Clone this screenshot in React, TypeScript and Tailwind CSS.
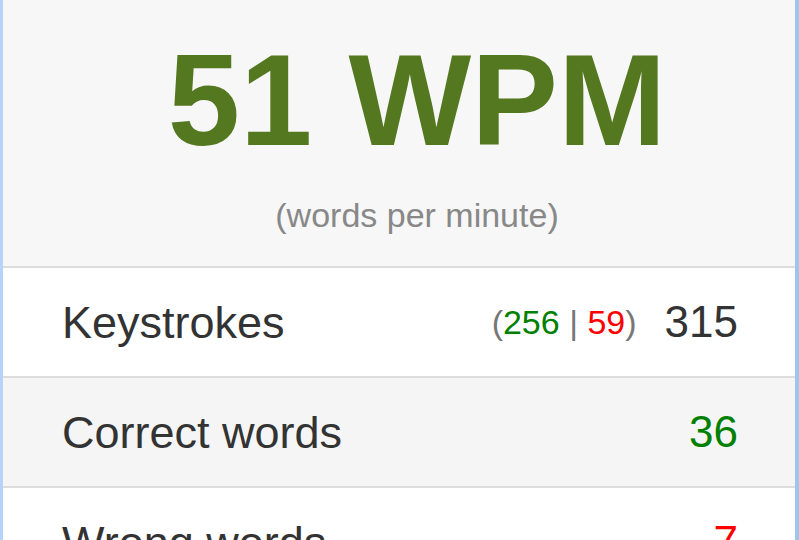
export default function App() {
  const rows = [
    { label: "Keystrokes", value: "315", color: "text-[#333]", bg: "bg-white", detail: true },
    { label: "Correct words", value: "36", color: "text-[#008000]", bg: "bg-[#f5f5f5]", detail: false },
    { label: "Wrong words", value: "7", color: "text-[#ff0000]", bg: "bg-white", detail: false },
  ];

  return (
    <div className="w-[799px] h-[540px] overflow-hidden flex font-['Liberation_Sans',Arial,sans-serif]">
      <div className="w-[3px] shrink-0 bg-[#b5d3fb]" />
      <div className="flex-1 flex flex-col">
        {/* Result header */}
        <div className="h-[268px] shrink-0 bg-[#f7f7f7] flex flex-col items-center pl-[36px] border-b-2 border-[#dddddd]">
          <div className="mt-[30px] text-[130px] leading-[140px] font-bold text-[#54781f]">51 WPM</div>
          <div className="mt-[26px] text-[34px] leading-[38px] text-[#888888]">(words per minute)</div>
        </div>

        {rows.map((row) => (
          <div
            key={row.label}
            className={`h-[110px] shrink-0 ${row.bg} border-b-2 border-[#dddddd] flex items-center justify-between pl-[59px] pr-[57px]`}
          >
            <span className="text-[45px] leading-none text-[#333333]">{row.label}</span>
            <span className="flex items-center">
              {row.detail && (
                <span className="text-[34px] leading-none mr-[28px] text-[#777777]">
                  (<span className="text-[#008000]">256</span> | <span className="text-[#ff0000]">59</span>)
                </span>
              )}
              <span className={`text-[44px] leading-none ${row.color}`}>{row.value}</span>
            </span>
          </div>
        ))}
      </div>
      <div className="w-[4px] shrink-0 bg-[#9fc5ec]" />
    </div>
  );
}
